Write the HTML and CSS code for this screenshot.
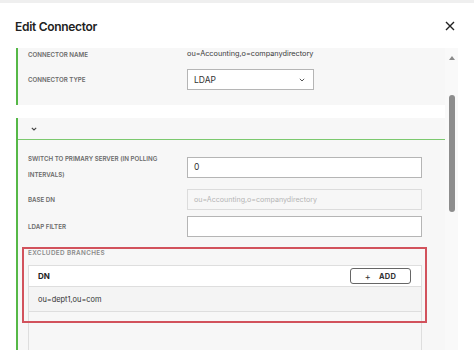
FILE: index.html
```html
<!DOCTYPE html>
<html>
<head>
<meta charset="utf-8">
<link rel="stylesheet" href="styles.css">
</head>
<body>
<div class="dialog">
  <div class="header">
    <h1 class="title">Edit Connector</h1>
    <button class="close" aria-label="Close">
      <svg width="10" height="10" viewBox="0 0 10 10"><path d="M1 1L9 9M9 1L1 9" stroke="#222" stroke-width="1.4" fill="none"/></svg>
    </button>
  </div>
  <div class="body">
    <div class="content">
      <section class="sec sec1">
        <div class="row row-name">
          <span class="label">CONNECTOR NAME</span>
          <span class="value">ou=Accounting,o=companydirectory</span>
        </div>
        <div class="row">
          <span class="label">CONNECTOR TYPE</span>
          <div class="select">
            <span>LDAP</span>
            <svg width="6" height="4" viewBox="0 0 6 4"><path d="M0.8 0.8L3 3L5.2 0.8" stroke="#555" stroke-width="1" fill="none"/></svg>
          </div>
        </div>
      </section>
      <section class="sec sec2">
        <div class="sec-head">
          <svg width="6" height="4" viewBox="0 0 6 4"><path d="M0.8 0.8L3 3L5.2 0.8" stroke="#444" stroke-width="1.1" fill="none"/></svg>
        </div>
        <div class="sec-body">
          <div class="row row-two">
            <span class="label">SWITCH TO PRIMARY SERVER (IN POLLING INTERVALS)</span>
            <div class="input">0</div>
          </div>
          <div class="row">
            <span class="label">BASE DN</span>
            <div class="input disabled">ou=Accounting,o=companydirectory</div>
          </div>
          <div class="row">
            <span class="label">LDAP FILTER</span>
            <div class="input"></div>
          </div>
          <div class="excluded">
            <div class="ex-label">EXCLUDED BRANCHES</div>
            <div class="table">
              <div class="thead">
                <span class="th">DN</span>
                <button class="add"><span class="plus">+</span>ADD</button>
              </div>
              <div class="trow">ou=dept1,ou=com</div>
              <div class="tempty"></div>
            </div>
            <div class="highlight"></div>
          </div>
        </div>
      </section>
    </div>
    <div class="scrollbar">
      <div class="arrow"></div>
      <div class="thumb"></div>
    </div>
  </div>
</div>
</body>
</html>
```

FILE: styles.css
```css
* { box-sizing: border-box; }
html, body { margin: 0; padding: 0; background: #fff; }
body {
  width: 474px;
  height: 350px;
  overflow: hidden;
  font-family: "Inter", "Liberation Sans", sans-serif;
  color: #333;
}
.dialog {
  border-top: 3px solid #efefef;
  height: 350px;
  display: flex;
  flex-direction: column;
}
.header {
  height: 45px;
  display: flex;
  align-items: center;
  justify-content: space-between;
  padding: 0 19px 0 15px;
}
.title {
  margin: 0;
  font-size: 12px;
  font-weight: 600;
  color: #222;
  letter-spacing: -0.3px;
  padding-top: 2px;
}
.close {
  border: 0;
  background: none;
  padding: 0;
  width: 10px;
  height: 10px;
  display: flex;
}
.body {
  flex: 1;
  display: flex;
  padding-left: 16px;
  overflow: hidden;
}
.content {
  width: 429px;
  flex: none;
}
.scrollbar {
  width: 13px;
  background: #f9f9f9;
  display: flex;
  flex-direction: column;
  align-items: center;
}
.arrow {
  margin-top: 8px;
  width: 0;
  height: 0;
  border-left: 3.5px solid transparent;
  border-right: 3.5px solid transparent;
  border-bottom: 4px solid #8a8a8a;
}
.thumb {
  margin-top: 35px;
  width: 6px;
  height: 117px;
  border-radius: 3px;
  background: #8d8d8d;
}
.sec {
  border-left: 2px solid #55b847;
  background: #f7f7f7;
}
.sec1 {
  padding: 0 23px 15px 10px;
}
.row {
  display: grid;
  grid-template-columns: 159px 1fr;
  align-items: center;
}
.row-name {
  height: 12px;
  margin-bottom: 9px;
}
.label {
  font-size: 6.2px;
  font-weight: 600;
  color: #6a6a6a;
}
.value {
  font-size: 7.3px;
  color: #3a3a3a;
  margin-top: -2px;
}
.select {
  width: 127px;
  height: 21px;
  border: 1px solid #b5b5b5;
  background: #fff;
  display: flex;
  align-items: center;
  justify-content: space-between;
  padding: 0 8px 0 6px;
  font-size: 8.5px;
  color: #333;
}
.sec2 {
  margin-top: 13px;
}
.sec-head {
  height: 22px;
  border-bottom: 1px solid #7cc96f;
  display: flex;
  align-items: center;
  padding-left: 13px;
}
.sec-body {
  padding: 11px 23px 0 10px;
  display: flex;
  flex-direction: column;
  gap: 6px;
}
.row-two .label {
  line-height: 16px;
  padding-right: 22px;
}
.input {
  height: 21px;
  border: 1px solid #b5b5b5;
  background: #fff;
  display: flex;
  align-items: center;
  padding: 0 6px;
  font-size: 8.5px;
  color: #333;
}
.input.disabled {
  background: #f7f7f7;
  border-color: #dcdcdc;
  color: #b4b4b4;
  font-size: 7.1px;
}
.excluded {
  position: relative;
  margin-top: 5px;
}
.ex-label {
  height: 10px;
  line-height: 10px;
  font-size: 6.3px;
  font-weight: 600;
  letter-spacing: 0.4px;
  color: #8a8a8a;
  margin-bottom: 7px;
}
.table {
  border: 1px solid #dedede;
}
.thead {
  height: 21px;
  background: #fff;
  display: flex;
  align-items: center;
  justify-content: space-between;
  padding: 0 10px 0 9px;
  border-bottom: 1px solid #dedede;
}
.th {
  font-size: 8px;
  font-weight: 700;
  color: #222;
}
.add {
  width: 61px;
  height: 16px;
  border: 1px solid #666;
  border-radius: 3px;
  background: #fff;
  font-family: inherit;
  font-size: 7.5px;
  font-weight: 700;
  color: #333;
  display: flex;
  align-items: center;
  justify-content: center;
  gap: 8px;
  padding: 0;
  letter-spacing: 0.3px;
}
.plus {
  font-weight: 400;
  font-size: 9px;
}
.trow {
  height: 25px;
  background: #f4f4f4;
  display: flex;
  align-items: center;
  padding-left: 9px;
  font-size: 7.4px;
  color: #333;
  border-bottom: 1px solid #dedede;
}
.tempty {
  height: 60px;
  background: #f7f7f7;
}
.highlight {
  position: absolute;
  left: -6px;
  top: -1px;
  width: 405px;
  height: 76px;
  border: 2px solid #d2525c;
  pointer-events: none;
}
```
